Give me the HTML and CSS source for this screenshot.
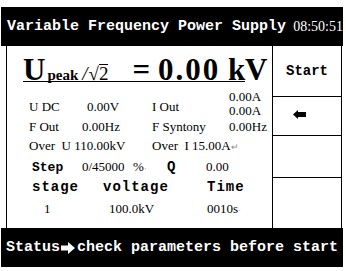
FILE: index.html
```html
<!DOCTYPE html>
<html>
	<head>
		<meta charset="UTF-8">
		<title>Variable Frequency Power Supply</title>
		<link rel="stylesheet" href="styles.css">
	</head>
	<body>
		<div class="panel">
			<!--标题栏-->
			<div class="title">
				<span class="name">Variable Frequency Power Supply</span>
				<span class="clock">08:50:51</span>
			</div>
			<div class="main">
				<!--读数区-->
				<div class="readout">
					<div class="formula">
						<span class="u">U</span><span class="peak">peak</span><span class="root">/<i>√</i><span class="two">2</span></span>
						<span class="value">= <span class="num">0.00</span> kV</span>
					</div>
					<div class="row r1">
						<span class="c1">U DC</span>
						<span class="c2">0.00V</span>
						<span class="c3">I Out</span>
						<span class="stack"><span>0.00A</span><span>0.00A</span></span>
					</div>
					<div class="row r2">
						<span class="c1">F Out</span>
						<span class="c2 hz">0.00Hz</span>
						<span class="c3">F Syntony</span>
						<span class="c4">0.00Hz</span>
					</div>
					<div class="row r3">
						<span class="c12">Over&nbsp; U 110.00kV</span>
						<span class="c3">Over&nbsp; I 15.00A<small class="ret">↵</small></span>
					</div>
					<div class="row r4">
						<b class="step">Step</b>
						<span class="total">0/45000</span>
						<span class="pct">%<small class="dot">·</small></span>
						<b class="q">Q</b>
						<span>0.00</span>
					</div>
					<div class="row r5">
						<b class="h1">stage</b>
						<b class="h2">voltage</b>
						<b class="h3">Time</b>
					</div>
					<div class="row r6">
						<span class="v1">1</span>
						<span class="v2">100.0kV</span>
						<span class="v3">0010s<small class="dot">·</small></span>
					</div>
				</div>
				<!--右侧按键-->
				<div class="keys">
					<div class="key k1">Start</div>
					<div class="key k2">
						<svg width="13" height="9" viewBox="0 0 13 9"><path d="M0 4.5L5 0v2h8v5H5v2z" fill="#000"/></svg>
					</div>
					<div class="key k3"></div>
					<div class="key k4"></div>
				</div>
			</div>
			<!--状态栏-->
			<div class="status">
				<span class="label">Status</span>
				<svg class="arrow" width="14" height="12" viewBox="0 0 14 12"><path d="M0 3.5h7V0l7 6-7 6V8.5H0z" fill="#fff"/></svg>
				<span class="msg">check parameters before start</span>
			</div>
		</div>
	</body>
</html>
```

FILE: styles.css
```css
* {
	margin: 0;
	padding: 0;
	box-sizing: border-box;
}

body {
	background: #fff;
	color: #000;
	font-family: "Liberation Serif", serif;
	font-size: 13px;
}

.panel {
	width: 342px;
	margin: 7px 0 0 1px;
}

.title {
	height: 39px;
	background: #000;
	color: #fff;
	display: flex;
	align-items: center;
	justify-content: space-between;
	padding: 0 0 0 6px;
}

.title .name {
	font-family: "Liberation Mono", monospace;
	font-weight: bold;
	font-size: 15px;
}

.title .clock {
	font-size: 14px;
}

.main {
	height: 182px;
	margin: 0 1px 0 5px;
	border-left: 1px solid #000;
	border-right: 1px solid #000;
	display: flex;
}

.readout {
	flex: 1;
	padding-left: 16px;
}

.formula {
	width: 222px;
	height: 27px;
	margin-top: 9px;
	line-height: 30px;
	border-bottom: 1px solid #000;
	white-space: nowrap;
	display: flex;
	align-items: baseline;
}

.formula .u {
	font-size: 31px;
	font-weight: bold;
}

.formula .peak {
	font-size: 15px;
	font-weight: bold;
	margin-left: 2px;
}

.formula .root {
	font-size: 19px;
	margin-left: 4px;
	font-style: italic;
}

.formula .root i {
	margin-left: 1px;
}

.formula .two {
	font-style: normal;
	border-top: 1px solid #000;
	line-height: 17px;
	display: inline-block;
}

.formula .value {
	font-size: 31px;
	font-weight: bold;
	margin-left: 24px;
}

.formula .num {
	letter-spacing: 2px;
}

.row {
	display: flex;
	align-items: baseline;
	height: 20px;
	line-height: 20px;
	padding-left: 6px;
	white-space: nowrap;
}

.r1 {
	margin-top: 15px;
}

.c1 {
	width: 58px;
}

.c2 {
	width: 65px;
}

.hz {
	margin-left: -5px;
	width: 70px;
}

.c12 {
	width: 123px;
}

.c3 {
	width: 77px;
}

.stack {
	display: flex;
	flex-direction: column;
	line-height: 14px;
	position: relative;
	top: -10px;
}

.ret {
	font-size: 9px;
	color: #888;
}

.dot {
	font-size: 9px;
	color: #999;
}

.r2 {
	height: 19px;
}

.r3 {
	height: 21px;
}

.r4 {
	padding-left: 9px;
}

.step,
.q,
.h1,
.h2,
.h3 {
	font-family: "Liberation Mono", monospace;
	font-weight: bold;
}

.step {
	font-size: 13px;
	width: 50px;
}

.total {
	width: 51px;
}

.pct {
	width: 34px;
}

.q {
	font-size: 14px;
	width: 39px;
}

.r5 {
	padding-left: 9px;
	height: 22px;
}

.h1,
.h2,
.h3 {
	font-size: 14px;
	letter-spacing: 1px;
}

.h1 {
	width: 71px;
}

.h2 {
	width: 104px;
}

.r6 {
	padding-left: 21px;
	height: 21px;
}

.v1 {
	width: 65px;
}

.v2 {
	width: 98px;
}

.keys {
	width: 69px;
	border-left: 1px solid #000;
	display: flex;
	flex-direction: column;
}

.key {
	border-bottom: 1px solid #000;
	display: flex;
	align-items: center;
	justify-content: center;
}

.k1 {
	height: 51px;
	font-family: "Liberation Mono", monospace;
	font-weight: bold;
	font-size: 14px;
}

.k2 {
	height: 39px;
	align-items: flex-start;
	justify-content: flex-start;
	padding: 13px 0 0 20px;
}

.k3 {
	height: 42px;
}

.k4 {
	flex: 1;
	border-bottom: none;
}

.status {
	height: 39px;
	background: #000;
	color: #fff;
	display: flex;
	align-items: center;
	padding-left: 5px;
	font-family: "Liberation Mono", monospace;
	font-weight: bold;
	font-size: 15px;
	white-space: nowrap;
}

.status .arrow {
	margin: 0 2px 0 1px;
}
```
